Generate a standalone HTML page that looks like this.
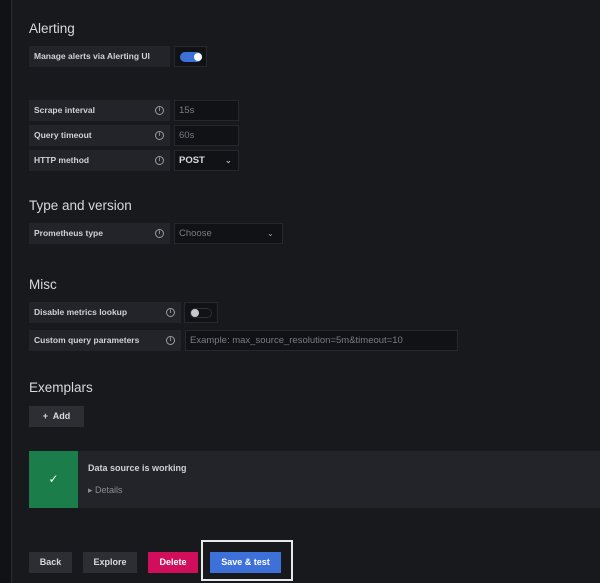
<!DOCTYPE html><html><head><style>
body{margin:0;width:600px;height:583px;background:#18191d;font-family:"Liberation Sans",sans-serif;position:relative;overflow:hidden;color:#d8d9dc}
.a{position:absolute}
.side{left:0;top:0;width:11px;height:583px;background:#111216;border-right:1px solid #2a2b30}
h{position:absolute;font-size:13.5px;color:#d8d9dc}
.lb{position:absolute;background:#22242a;font-size:8.5px;font-weight:bold;color:#d0d1d5;height:21px;line-height:21px;padding-left:5px;box-sizing:border-box}
.in{position:absolute;background:#111216;border:1px solid #26282d;height:21px;box-sizing:border-box;font-size:9.5px;line-height:19px;padding-left:4px;color:#7a7c82}
.i{position:absolute;right:6px;top:6px;width:7px;height:7px;border:1px solid #9a9ca2;border-radius:50%;font-size:6px;line-height:7px;text-align:center;color:#9a9ca2;font-weight:bold}
.btn{position:absolute;height:21px;line-height:21px;font-size:9px;font-weight:bold;text-align:center;color:#d8d9dc;background:#2c2e33}
.chev{position:absolute;font-size:8px;color:#aaa}
</style></head><body>
<div class="a side"></div>
<h style="left:29px;top:21px">Alerting</h>
<div class="lb" style="left:29px;top:46px;width:141px">Manage alerts via Alerting UI</div>
<div class="in" style="left:174px;top:46px;width:33px"><div class="a" style="left:5px;top:5px;width:22px;height:10px;border-radius:5px;background:#3d71d9"></div><div class="a" style="left:19px;top:6px;width:8px;height:8px;border-radius:50%;background:#fff"></div></div>

<div class="lb" style="left:29px;top:100px;width:141px">Scrape interval<div class="i">i</div></div>
<div class="in" style="left:174px;top:100px;width:65px">15s</div>
<div class="lb" style="left:29px;top:125px;width:141px">Query timeout<div class="i">i</div></div>
<div class="in" style="left:174px;top:125px;width:65px">60s</div>
<div class="lb" style="left:29px;top:150px;width:141px">HTTP method<div class="i">i</div></div>
<div class="in" style="left:174px;top:150px;width:65px;color:#d8d9dc;font-weight:bold">POST<span class="chev" style="left:50px;top:0">⌄</span></div>

<h style="left:29px;top:198px">Type and version</h>
<div class="lb" style="left:29px;top:223px;width:141px">Prometheus type<div class="i">i</div></div>
<div class="in" style="left:174px;top:223px;width:109px">Choose<span class="chev" style="left:92px;top:0">⌄</span></div>

<h style="left:29px;top:277px">Misc</h>
<div class="lb" style="left:29px;top:302px;width:152px">Disable metrics lookup<div class="i">i</div></div>
<div class="in" style="left:184px;top:302px;width:34px"><div class="a" style="left:5px;top:5px;width:22px;height:10px;border-radius:5px;border:1px solid #2e3035;box-sizing:border-box"></div><div class="a" style="left:6px;top:6px;width:8px;height:8px;border-radius:50%;background:#c8c9cc"></div></div>
<div class="lb" style="left:29px;top:330px;width:152px">Custom query parameters<div class="i">i</div></div>
<div class="in" style="left:185px;top:330px;width:273px">Example: max_source_resolution=5m&amp;timeout=10</div>

<h style="left:29px;top:380px">Exemplars</h>
<div class="btn" style="left:29px;top:406px;width:55px">+&nbsp; Add</div>

<div class="a" style="left:29px;top:451px;width:571px;height:57px;background:#22242a"></div>
<div class="a" style="left:29px;top:451px;width:49px;height:57px;background:#1b7d4a;color:#fff;text-align:center;line-height:57px;font-size:12px">✓</div>
<div class="a" style="left:88px;top:463px;font-size:9px;font-weight:bold;color:#d0d1d5">Data source is working</div>
<div class="a" style="left:88px;top:485px;font-size:9px;color:#8a8c92">▸ Details</div>

<div class="btn" style="left:29px;top:552px;width:43px">Back</div>
<div class="btn" style="left:83px;top:552px;width:54px">Explore</div>
<div class="btn" style="left:148px;top:552px;width:50px;background:#d10e5c;color:#fff">Delete</div>
<div class="a" style="left:201px;top:540px;width:88px;height:37px;border:2px solid #e8e8e8"></div>
<div class="btn" style="left:210px;top:552px;width:71px;background:#3d71d9;color:#fff">Save &amp; test</div>
</body></html>
